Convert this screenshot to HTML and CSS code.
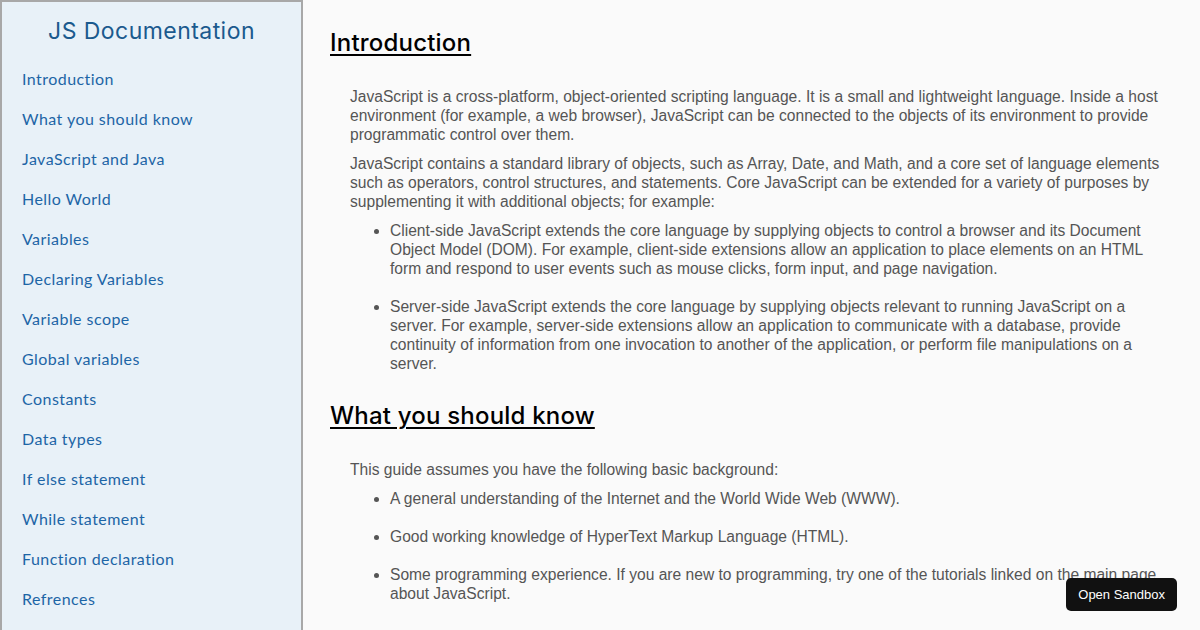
FILE: index.html
```html
<!DOCTYPE html>
<html lang="en">
<head>
<meta charset="utf-8">
<title>JS Documentation</title>
<link rel="stylesheet" href="styles.css">
</head>
<body>
<div class="page">
  <nav class="sidebar">
    <header class="sidebar-title">JS Documentation</header>
    <ul class="nav-list">
      <li><a class="nav-link" href="#">Introduction</a></li>
      <li><a class="nav-link" href="#">What you should know</a></li>
      <li><a class="nav-link" href="#">JavaScript and Java</a></li>
      <li><a class="nav-link" href="#">Hello World</a></li>
      <li><a class="nav-link" href="#">Variables</a></li>
      <li><a class="nav-link" href="#">Declaring Variables</a></li>
      <li><a class="nav-link" href="#">Variable scope</a></li>
      <li><a class="nav-link" href="#">Global variables</a></li>
      <li><a class="nav-link" href="#">Constants</a></li>
      <li><a class="nav-link" href="#">Data types</a></li>
      <li><a class="nav-link" href="#">If else statement</a></li>
      <li><a class="nav-link" href="#">While statement</a></li>
      <li><a class="nav-link" href="#">Function declaration</a></li>
      <li><a class="nav-link" href="#">Refrences</a></li>
    </ul>
  </nav>
  <main class="main">
    <section class="section">
      <header class="section-title">Introduction</header>
      <article class="section-body">
        <p>JavaScript is a cross-platform, object-oriented scripting language. It is a small and lightweight language. Inside a host environment (for example, a web browser), JavaScript can be connected to the objects of its environment to provide programmatic control over them.</p>
        <p>JavaScript contains a standard library of objects, such as Array, Date, and Math, and a core set of language elements such as operators, control structures, and statements. Core JavaScript can be extended for a variety of purposes by supplementing it with additional objects; for example:</p>
        <ul>
          <li>Client-side JavaScript extends the core language by supplying objects to control a browser and its Document Object Model (DOM). For example, client-side extensions allow an application to place elements on an HTML form and respond to user events such as mouse clicks, form input, and page navigation.</li>
          <li>Server-side JavaScript extends the core language by supplying objects relevant to running JavaScript on a server. For example, server-side extensions allow an application to communicate with a database, provide continuity of information from one invocation to another of the application, or perform file manipulations on a server.</li>
        </ul>
      </article>
    </section>
    <section class="section">
      <header class="section-title">What you should know</header>
      <article class="section-body">
        <p>This guide assumes you have the following basic background:</p>
        <ul>
          <li>A general understanding of the Internet and the World Wide Web (WWW).</li>
          <li>Good working knowledge of HyperText Markup Language (HTML).</li>
          <li>Some programming experience. If you are new to programming, try one of the tutorials linked on the main page about JavaScript.</li>
        </ul>
      </article>
    </section>
  </main>
</div>
<a class="sandbox-btn" href="#">Open Sandbox</a>
</body>
</html>
```
FILE: styles.css
```css
html, body {
  margin: 0;
  padding: 0;
  height: 100%;
  overflow: hidden;
}
body {
  background: #fafafa;
  font-family: "Liberation Sans", Arial, sans-serif;
}
.page {
  display: flex;
  height: 630px;
}
.sidebar {
  flex: 0 0 auto;
  width: 299px;
  height: 660px;
  background: #e8f1f8;
  border: 2px solid #a8a8a8;
  border-bottom: none;
  box-sizing: content-box;
}
.sidebar-title {
  font-family: Inter, "DejaVu Sans", sans-serif;
  font-size: 23px;
  font-weight: 400;
  color: #1b5a8e;
  text-align: center;
  padding-top: 16px;
  height: 41px;
  line-height: 26px;
  letter-spacing: 0.45px;
}
.nav-list {
  list-style: none;
  margin: 0;
  padding: 0 0 0 20px;
}
.nav-list li {
  height: 40px;
  line-height: 40px;
}
.nav-link {
  font-family: Lato, "Open Sans", sans-serif;
  font-size: 16px;
  color: #1d65a6;
  text-decoration: none;
  letter-spacing: 0.45px;
}
.main {
  flex: 1 1 auto;
  padding: 28px 24px 0 27px;
  overflow: hidden;
}
.section {
  margin-bottom: 28px;
}
.section-title {
  font-family: Inter, "DejaVu Sans", sans-serif;
  font-size: 24px;
  font-weight: 500;
  color: #000;
  text-decoration: underline;
  text-underline-offset: 3px;
  text-decoration-thickness: 2px;
  line-height: 30px;
  letter-spacing: 0.2px;
  margin-bottom: 29px;
}
.section-body {
  padding-left: 20px;
  color: #555;
  font-size: 15.6px;
  line-height: 19px;
}
.section-body p {
  margin: 0 0 10px 0;
}
.section-body ul {
  margin: 0;
  padding-left: 40px;
}
.section-body li {
  margin-bottom: 19px;
}
.sandbox-btn {
  position: fixed;
  right: 23px;
  bottom: 19px;
  background: #111;
  color: #fff;
  font-size: 13px;
  padding: 9px 12px;
  border-radius: 5px;
  text-decoration: none;
  line-height: 15px;
}
```
